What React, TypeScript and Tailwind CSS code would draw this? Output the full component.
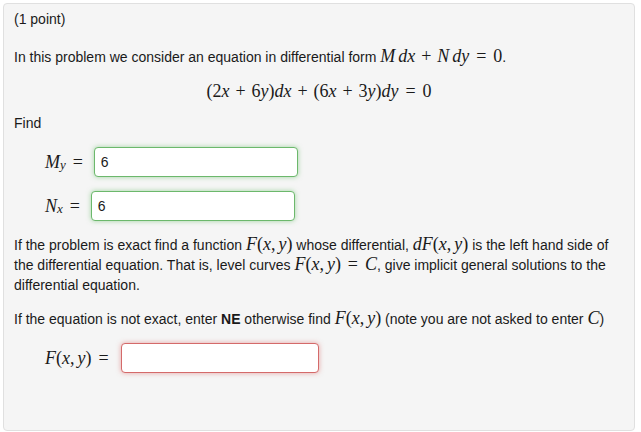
import React from "react";

const I = ({ children }: { children: React.ReactNode }) => (
  <span className="italic">{children}</span>
);

const Plus = () => (
  <span className="inline-block w-[0.778em] mx-[0.222em] text-center not-italic">+</span>
);
const Eq = () => (
  <span className="inline-block w-[0.778em] mx-[0.278em] text-center not-italic">=</span>
);

const M = ({ children }: { children: React.ReactNode }) => (
  <span className="font-['Liberation_Serif',serif] text-[18px] leading-none whitespace-nowrap">{children}</span>
);

const Fxy = () => (
  <>
    <I>F</I>(<I>x</I>,<span className="ml-[3px]" /><I>y</I>)
  </>
);

export default function App() {
  return (
    <div className="pt-[3px] pl-[3px]">
      <div className="w-[632px] h-[428px] rounded-[4px] border border-[#e0e0e0] bg-[#f5f5f5] px-[10px] pt-[5px] font-['Liberation_Sans',Arial,sans-serif] text-[14px] text-[#1a1a1a]">
        <div className="h-[20px] leading-[20px]">(1 point)</div>

        <div className="mt-[18px] h-[20px] leading-[20px]">
          In this problem we consider an equation in differential form{" "}
          <M>
            <I>M</I>
            <span className="ml-[3px]" />
            <I>dx</I>
            <Plus />
            <I>N</I>
            <span className="ml-[3px]" />
            <I>dy</I>
            <Eq />0
          </M>
          .
        </div>

        <div className="mt-[12px] h-[24px] flex items-center justify-center">
          <M>
            (2<I>x</I>
            <Plus />6<I>y</I>)<I>dx</I>
            <Plus />(6<I>x</I>
            <Plus />3<I>y</I>)<I>dy</I>
            <Eq />0
          </M>
        </div>

        <div className="mt-[10px] h-[20px] leading-[20px]">Find</div>

        <div className="mt-[14px] h-[30px] flex items-center pl-[31px]">
          <M>
            <I>M</I>
            <sub className="text-[13px] italic relative top-[1px]">y</sub>
            <Eq />
          </M>
          <div className="ml-[4px] w-[204px] h-[30px] rounded-[4px] border border-[#6cb86c] bg-white shadow-[0_0_5px_rgba(92,184,92,0.55)] flex items-center pl-[6px]">
            6
          </div>
        </div>

        <div className="mt-[14px] h-[30px] flex items-center pl-[31px]">
          <M>
            <I>N</I>
            <sub className="text-[13px] italic relative top-[1px]">x</sub>
            <Eq />
          </M>
          <div className="ml-[4px] w-[204px] h-[30px] rounded-[4px] border border-[#6cb86c] bg-white shadow-[0_0_5px_rgba(92,184,92,0.55)] flex items-center pl-[6px]">
            6
          </div>
        </div>

        <div className="mt-[14px] leading-[20px]">
          If the problem is exact find a function{" "}
          <M>
            <Fxy />
          </M>{" "}
          whose differential,{" "}
          <M>
            <I>dF</I>(<I>x</I>,<span className="ml-[3px]" /><I>y</I>)
          </M>{" "}
          is the left hand side of the differential equation. That is, level curves{" "}
          <M>
            <Fxy />
            <Eq />
            <I>C</I>
          </M>
          , give implicit general solutions to the differential equation.
        </div>

        <div className="mt-[14px] h-[20px] leading-[20px]">
          If the equation is not exact, enter <b>NE</b> otherwise find{" "}
          <M>
            <Fxy />
          </M>{" "}
          (note you are not asked to enter{" "}
          <M>
            <I>C</I>
          </M>
          )
        </div>

        <div className="mt-[14px] h-[30px] flex items-center pl-[31px]">
          <M>
            <Fxy />
            <Eq />
          </M>
          <div className="ml-[5px] w-[198px] h-[30px] rounded-[4px] border border-[#d46a6a] bg-white shadow-[0_0_5px_rgba(217,83,79,0.5)]" />
        </div>
      </div>
    </div>
  );
}
